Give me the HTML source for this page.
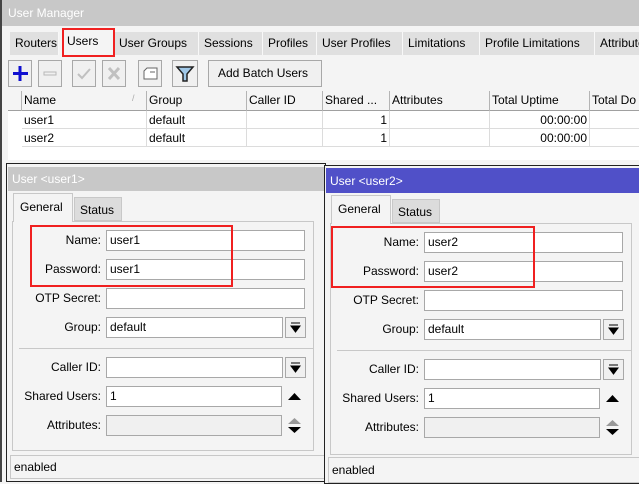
<!DOCTYPE html>
<html><head><style>
*{margin:0;padding:0;box-sizing:border-box}
body{width:639px;height:482px;overflow:hidden;background:#f4f4f4;font-family:"Liberation Sans",sans-serif;font-size:12px;color:#000;position:relative}
.a{position:absolute}
.t{position:absolute;white-space:nowrap;line-height:14px}
.tab{position:absolute;top:32px;height:23px;background:#e0e0e0;border-right:1px solid #f8f8f8;padding:4px 5px 0 5px;white-space:nowrap}
.btn{position:absolute;top:60px;height:27px;border:1px solid #a8a8a8;background:#f0f0f0}
.th{position:absolute;top:91px;height:20px;border-right:1px solid #b4b4b4;padding:2px 2px;white-space:nowrap;overflow:hidden}
.td{position:absolute;height:18px;border-right:1px solid #dcdcdc;border-bottom:1px solid #dcdcdc;padding:2px 2px;white-space:nowrap;overflow:hidden;background:#fff}
.in{position:absolute;height:21px;background:#fff;border:1px solid #a8a8a8;padding:2px 3px;line-height:15px}
.lb{position:absolute;text-align:right;width:94px;line-height:21px;height:21px}
.dd{position:absolute;width:21px;height:21px;border:1px solid #a8a8a8;background:#f0f0f0}
.red{position:absolute;border:2px solid #f02020}
</style></head><body>
<!-- main window -->
<div class="a" style="left:0;top:0;width:639px;height:26px;background:#c8c8c8"></div>
<div class="a" style="left:0;top:0;width:2px;height:482px;background:#444"></div>
<div class="t" style="left:8px;top:6px;color:#fff;font-size:12px">User Manager</div>
<div class="tab" style="left:10px;width:49px">Routers</div>
<div class="tab" style="left:62px;width:52px;background:#f4f4f4;top:30px">Users</div>
<div class="tab" style="left:114px;width:85px">User Groups</div>
<div class="tab" style="left:199px;width:64px">Sessions</div>
<div class="tab" style="left:263px;width:54px">Profiles</div>
<div class="tab" style="left:317px;width:86px">User Profiles</div>
<div class="tab" style="left:403px;width:77px">Limitations</div>
<div class="tab" style="left:480px;width:115px">Profile Limitations</div>
<div class="tab" style="left:595px;width:50px">Attributes</div>
<div class="red" style="left:62px;top:28px;width:53px;height:29px"></div>
<!-- toolbar -->
<div class="btn" style="left:8px;width:24px"><svg width="22" height="25"><path d="M11 5v15M4 12.5h15" stroke="#1010d0" stroke-width="3"/></svg></div>
<div class="btn" style="left:38px;width:24px"><svg width="22" height="25"><rect x="5" y="11" width="12" height="3" fill="none" stroke="#b8b8b8"/></svg></div>
<div class="btn" style="left:72px;width:24px"><svg width="22" height="25"><path d="M5 13l4 4 8-9" fill="none" stroke="#c0c0c0" stroke-width="2"/></svg></div>
<div class="btn" style="left:102px;width:24px"><svg width="22" height="25"><path d="M6 7l10 11M16 7L6 18" fill="none" stroke="#c0c0c0" stroke-width="3"/></svg></div>
<div class="btn" style="left:138px;width:24px"><svg width="22" height="25"><path d="M5 10l3-3h10v11H5z" fill="#fff" stroke="#666"/><path d="M11 11h5" stroke="#666"/></svg></div>
<div class="btn" style="left:172px;width:26px"><svg width="24" height="25"><path d="M4 6h16l-6 7v7h-4v-7z" fill="#a0c8e8" stroke="#222" stroke-width="1.5"/></svg></div>
<div class="btn" style="left:208px;width:114px;padding:5px 0 0 9px">Add Batch Users</div>
<!-- table -->
<div class="a" style="left:8px;top:90px;width:631px;height:70px;background:#fff;border-top:1px solid #a0a0a0"></div>
<div class="a" style="left:8px;top:90px;width:631px;height:21px;background:#f4f4f4;border-bottom:1px solid #a0a0a0"></div>
<div class="th" style="left:8px;width:14px"></div>
<div class="th" style="left:22px;width:125px">Name<span style="position:absolute;left:110px;color:#aaa;font-size:9px">/</span></div>
<div class="th" style="left:147px;width:100px">Group</div>
<div class="th" style="left:247px;width:76px">Caller ID</div>
<div class="th" style="left:323px;width:67px">Shared ...</div>
<div class="th" style="left:390px;width:100px">Attributes</div>
<div class="th" style="left:490px;width:100px">Total Uptime</div>
<div class="th" style="left:590px;width:60px">Total Do</div>
<div class="td" style="left:22px;top:111px;width:125px">user1</div>
<div class="td" style="left:147px;top:111px;width:100px">default</div>
<div class="td" style="left:247px;top:111px;width:76px"></div>
<div class="td" style="left:323px;top:111px;width:67px;text-align:right">1</div>
<div class="td" style="left:390px;top:111px;width:100px"></div>
<div class="td" style="left:490px;top:111px;width:100px;text-align:right">00:00:00</div>
<div class="td" style="left:590px;top:111px;width:60px"></div>
<div class="td" style="left:22px;top:129px;width:125px">user2</div>
<div class="td" style="left:147px;top:129px;width:100px">default</div>
<div class="td" style="left:247px;top:129px;width:76px"></div>
<div class="td" style="left:323px;top:129px;width:67px;text-align:right">1</div>
<div class="td" style="left:390px;top:129px;width:100px"></div>
<div class="td" style="left:490px;top:129px;width:100px;text-align:right">00:00:00</div>
<div class="td" style="left:590px;top:129px;width:60px"></div>

<!-- window 1 -->
<div class="a" style="left:6px;top:163px;width:320px;height:319px;background:#f4f4f4;border:1px solid #222">
 <div class="a" style="left:1px;top:3px;width:317px;height:24px;background:#c8c8c8"></div>
 <div class="t" style="left:5px;top:8px;color:#fff">User &lt;user1&gt;</div>
 <div class="a" style="left:5px;top:57px;width:302px;height:230px;border:1px solid #c8c8c8"></div>
 <div class="a" style="left:6px;top:29px;width:60px;height:29px;background:#f4f4f4;border:1px solid #c8c8c8;border-bottom:none;padding:6px 0 0 6px">General</div>
 <div class="a" style="left:67px;top:33px;width:48px;height:24px;background:#dcdcdc;border:1px solid #c8c8c8;padding:5px 0 0 5px">Status</div>
 <div class="lb" style="left:0;top:66px">Name:</div><div class="in" style="left:99px;top:66px;width:199px">user1</div>
 <div class="lb" style="left:0;top:95px">Password:</div><div class="in" style="left:99px;top:95px;width:199px">user1</div>
 <div class="lb" style="left:0;top:124px">OTP Secret:</div><div class="in" style="left:99px;top:124px;width:199px"></div>
 <div class="lb" style="left:0;top:153px">Group:</div><div class="in" style="left:99px;top:153px;width:177px">default</div>
 <div class="dd" style="left:278px;top:153px"><svg width="19" height="19"><path d="M5 5h9M5 8h9l-4.5 6z" stroke="#000" fill="#000"/></svg></div>
 <div class="a" style="left:12px;top:184px;width:295px;height:1px;background:#c8c8c8"></div>
 <div class="lb" style="left:0;top:193px">Caller ID:</div><div class="in" style="left:99px;top:193px;width:177px"></div>
 <div class="dd" style="left:278px;top:193px"><svg width="19" height="19"><path d="M5 5h9M5 8h9l-4.5 6z" stroke="#000" fill="#000"/></svg></div>
 <div class="lb" style="left:0;top:222px">Shared Users:</div><div class="in" style="left:99px;top:222px;width:176px">1</div>
 <svg class="a" style="left:280px;top:226px" width="16" height="14"><path d="M1 10h13L7.5 3z" fill="#000"/></svg>
 <div class="lb" style="left:0;top:251px">Attributes:</div><div class="in" style="left:99px;top:251px;width:176px;background:#f0f0f0"></div>
 <svg class="a" style="left:280px;top:252px" width="16" height="20"><path d="M1 8h13L7.5 2z" fill="#999"/><path d="M1 11h13L7.5 17z" fill="#000"/></svg>
 <div class="a" style="left:3px;top:291px;width:316px;height:24px;border:1px solid #c8c8c8;padding:4px 0 0 3px">enabled</div>
</div>
<div class="red" style="left:30px;top:225px;width:203px;height:62px"></div>

<!-- window 2 -->
<div class="a" style="left:324px;top:165px;width:320px;height:319px;background:#f4f4f4;border:1px solid #222">
 <div class="a" style="left:1px;top:2px;width:317px;height:25px;background:#5050c8"></div>
 <div class="t" style="left:5px;top:8px;color:#fff">User &lt;user2&gt;</div>
 <div class="a" style="left:5px;top:57px;width:302px;height:232px;border:1px solid #c8c8c8"></div>
 <div class="a" style="left:6px;top:29px;width:60px;height:29px;background:#f4f4f4;border:1px solid #c8c8c8;border-bottom:none;padding:6px 0 0 6px">General</div>
 <div class="a" style="left:67px;top:33px;width:48px;height:24px;background:#dcdcdc;border:1px solid #c8c8c8;padding:5px 0 0 5px">Status</div>
 <div class="lb" style="left:0;top:66px">Name:</div><div class="in" style="left:99px;top:66px;width:199px">user2</div>
 <div class="lb" style="left:0;top:95px">Password:</div><div class="in" style="left:99px;top:95px;width:199px">user2</div>
 <div class="lb" style="left:0;top:124px">OTP Secret:</div><div class="in" style="left:99px;top:124px;width:199px"></div>
 <div class="lb" style="left:0;top:153px">Group:</div><div class="in" style="left:99px;top:153px;width:177px">default</div>
 <div class="dd" style="left:278px;top:153px"><svg width="19" height="19"><path d="M5 5h9M5 8h9l-4.5 6z" stroke="#000" fill="#000"/></svg></div>
 <div class="a" style="left:12px;top:184px;width:295px;height:1px;background:#c8c8c8"></div>
 <div class="lb" style="left:0;top:193px">Caller ID:</div><div class="in" style="left:99px;top:193px;width:177px"></div>
 <div class="dd" style="left:278px;top:193px"><svg width="19" height="19"><path d="M5 5h9M5 8h9l-4.5 6z" stroke="#000" fill="#000"/></svg></div>
 <div class="lb" style="left:0;top:222px">Shared Users:</div><div class="in" style="left:99px;top:222px;width:176px">1</div>
 <svg class="a" style="left:280px;top:226px" width="16" height="14"><path d="M1 10h13L7.5 3z" fill="#000"/></svg>
 <div class="lb" style="left:0;top:251px">Attributes:</div><div class="in" style="left:99px;top:251px;width:176px;background:#f0f0f0"></div>
 <svg class="a" style="left:280px;top:252px" width="16" height="20"><path d="M1 8h13L7.5 2z" fill="#999"/><path d="M1 11h13L7.5 17z" fill="#000"/></svg>
 <div class="a" style="left:3px;top:291px;width:316px;height:26px;border:1px solid #c8c8c8;padding:5px 0 0 3px">enabled</div>
</div>
<div class="red" style="left:331px;top:226px;width:204px;height:62px"></div>
</body></html>
